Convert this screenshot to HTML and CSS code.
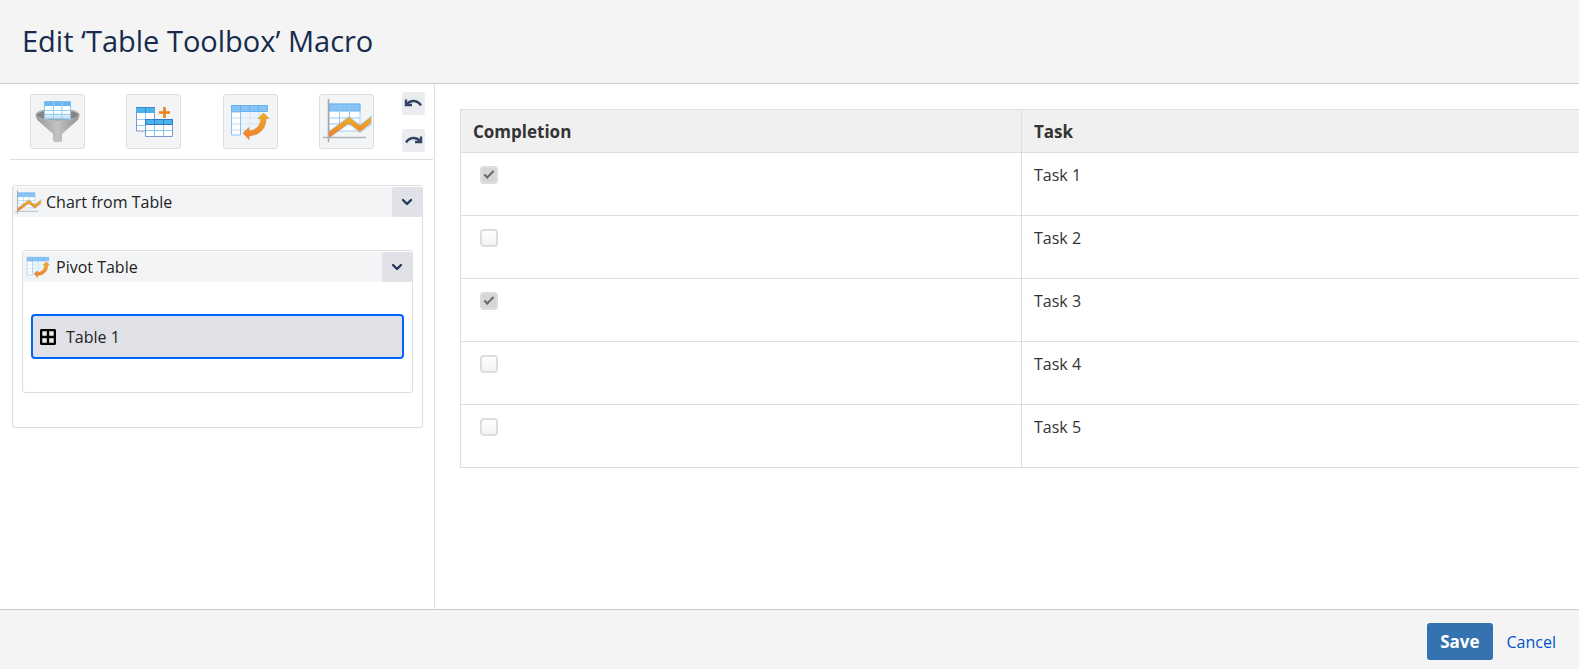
FILE: index.html
```
<!DOCTYPE html>
<html lang="en">
<head>
	<meta charset="UTF-8">
	<title>Table Toolbox</title>
	<link rel="stylesheet" href="styles.css">
</head>
<body>
	<!-- shared icons -->
	<svg class="defs" width="0" height="0" aria-hidden="true">
		<defs>
			<linearGradient id="grey" x1="0" y1="0" x2="1" y2="0">
				<stop offset="0" stop-color="#9a9a9a"/>
				<stop offset="0.5" stop-color="#c2c2c2"/>
				<stop offset="1" stop-color="#909090"/>
			</linearGradient>
			<linearGradient id="orange" x1="0" y1="0" x2="0" y2="1">
				<stop offset="0" stop-color="#ecb01e"/>
				<stop offset="1" stop-color="#f47a33"/>
			</linearGradient>
			<linearGradient id="sheet" x1="0" y1="0" x2="0" y2="1">
				<stop offset="0" stop-color="#fff"/>
				<stop offset="0.6" stop-color="#fff"/>
				<stop offset="1" stop-color="#b5daf3"/>
			</linearGradient>
		</defs>
		<symbol id="icon-pivot" viewBox="0 0 53 53">
			<path d="M17 17h27v6L31 39H17z" fill="#edf4fb"/>
			<path d="M17 23h25M17 29h20M17 35h10M26 17v20M35 17v12" stroke="#d3e6f7" fill="none"/>
			<path d="M7.500 10.500h36v6h-36z" fill="#86c4f7" stroke="#69b0ee"/>
			<path d="M7.500 17h9v23h-9z" fill="#fff" stroke="#8cc0ef"/>
			<path d="M8 23h8M8 29h8M8 35h8" stroke="#c0dcf5"/>
			<path d="M16.500 10v7M25.500 10v7M34.500 10v7" stroke="#69b0ee"/>
			<path d="M39.500 18l5.500 5.500h-3c0 10-6 16.500-17 17.500v3.500l-6-6.500 6-5.500v3.500c7-1 11.500-5 12-12.500h-3z" fill="url(#orange)" stroke="#d9842c" stroke-width=".6"/>
		</symbol>
		<symbol id="icon-chart" viewBox="0 0 53 53">
			<path d="M9 9h31v27H9z" fill="#fff" stroke="#a4cdf3"/>
			<path d="M9 9h31v7H9z" fill="#86c4f7" stroke="#69b0ee"/>
			<path d="M9 23h31M9 29h31M19.500 9v25M29.500 9v22" stroke="#93c9f2" fill="none"/>
			<path d="M8.500 4v43" stroke="#a2a6aa" stroke-width="1.500"/>
			<path d="M3 42.500h43" stroke="#b2b5b8" stroke-width="1.500"/>
			<path d="M9 37.500l20-15 11 9L50.500 23v6L40 36.500l-11-9-20 14z" fill="none" stroke="#9cc9f0" stroke-width="3" opacity=".5"/>
			<path d="M9 37L29 22.500l11 8.500L50.500 22.500v5.500L40 36.500l-11-8.500L9 42.500z" fill="url(#orange)" stroke="#d98d24" stroke-width=".6"/>
		</symbol>
		<symbol id="icon-chevron" viewBox="0 0 12 8">
			<path d="M2 2l4 4 4-4" fill="none" stroke="#253858" stroke-width="2.400" stroke-linecap="round" stroke-linejoin="round"/>
		</symbol>
	</svg>

	<header class="header">
		<h1>Edit ‘Table Toolbox’ Macro</h1>
	</header>

	<main class="main">
		<aside class="sidebar">
			<div class="toolbar">
				<div class="tools">
					<button type="button" class="tool" aria-label="Table Filter">
						<svg viewBox="0 0 53 53">
							<ellipse cx="26.500" cy="20" rx="21.500" ry="6" fill="#858585" stroke="#b5b5b5" stroke-width="1.500"/>
							<path d="M5 20.500c1 3 8 5.500 21.500 5.500S47 23.500 48 20.500c0 3-1 4-3 6L31 39v6c0 3-9 3-9 0v-6L8 26.500c-2-2-3-3-3-6z" fill="url(#grey)"/>
							<path d="M13.500 6.500h26v17.500h-26z" fill="url(#sheet)" stroke="#8fc7ef"/>
							<path d="M13.500 6.500h26v4.500h-26z" fill="#6bb6f1"/>
							<path d="M14 15.500h25M14 19.500h25M22.500 7v17M31 7v17" stroke="#93ccf2"/>
						</svg>
					</button>
					<button type="button" class="tool" aria-label="Table Joiner">
						<svg viewBox="0 0 53 53">
							<path d="M9.500 12.500h18v23.500h-18z" fill="#fff" stroke="#7f97cb"/>
							<path d="M9.500 12.500h18v5.500h-18z" fill="#4bb2ec"/>
							<path d="M10 24.500h17M10 30.500h17M18.500 18v18" stroke="#8bd0f4"/>
							<path d="M18.500 12v6M9 12.500h19" stroke="#3b88cf"/>
							<path d="M18.500 24.500h27v17h-27z" fill="#fff" stroke="#7f97cb"/>
							<path d="M18.500 24.500h27v5h-27z" fill="#4bb2ec" stroke="#3479c3"/>
							<path d="M19 35.500h26M27.500 30v11M36.500 30v11" stroke="#83c9f2"/>
							<path d="M27.500 24v6M36.500 24v6" stroke="#3479c3"/>
							<path d="M37.500 12v11M32 17.500h11" stroke="#ea8118" stroke-width="2.600"/>
						</svg>
					</button>
					<button type="button" class="tool" aria-label="Pivot Table">
						<svg><use href="#icon-pivot"/></svg>
					</button>
					<button type="button" class="tool" aria-label="Chart from Table">
						<svg><use href="#icon-chart"/></svg>
					</button>
				</div>
				<div class="history">
					<button type="button" aria-label="Undo">
						<svg viewBox="0 0 23 23">
							<path d="M5 12c4-4.500 10.500-4 14 1.500" fill="none" stroke="#344563" stroke-width="2.400"/>
							<path d="M4 7.500v5.500h6" fill="none" stroke="#344563" stroke-width="2.400"/>
						</svg>
					</button>
					<button type="button" aria-label="Redo">
						<svg viewBox="0 0 23 23">
							<path d="M18 12c-4-4.500-10.500-4-14 1.500" fill="none" stroke="#344563" stroke-width="2.400"/>
							<path d="M19 7.500v5.500h-6" fill="none" stroke="#344563" stroke-width="2.400"/>
						</svg>
					</button>
				</div>
			</div>

			<div class="tree">
				<section class="node">
					<div class="node-head">
						<svg class="node-icon" viewBox="4 2 49 49"><use href="#icon-chart" width="53" height="53"/></svg>
						<span>Chart from Table</span>
						<button type="button" class="node-menu" aria-label="Chart from Table menu">
							<svg><use href="#icon-chevron"/></svg>
						</button>
					</div>
					<div class="node-body">
						<section class="node">
							<div class="node-head">
								<svg class="node-icon" viewBox="4 5 45 45"><use href="#icon-pivot" width="53" height="53"/></svg>
								<span>Pivot Table</span>
								<button type="button" class="node-menu" aria-label="Pivot Table menu">
									<svg><use href="#icon-chevron"/></svg>
								</button>
							</div>
							<div class="node-body">
								<button type="button" class="leaf">
									<svg viewBox="0 0 16 16">
										<rect x="1" y="1" width="14" height="14" rx="1.500" fill="#eee" stroke="#000" stroke-width="2.600"/>
										<path d="M8 1v14M1 8h14" stroke="#000" stroke-width="2.400"/>
									</svg>
									<span>Table 1</span>
								</button>
							</div>
						</section>
					</div>
				</section>
			</div>
		</aside>

		<div class="preview">
			<table class="tasks">
				<thead>
					<tr><th>Completion</th><th>Task</th></tr>
				</thead>
				<tbody>
					<tr><td><input type="checkbox" id="task1" checked disabled></td><td><label for="task1">Task 1</label></td></tr>
					<tr><td><input type="checkbox" id="task2" disabled></td><td><label for="task2">Task 2</label></td></tr>
					<tr><td><input type="checkbox" id="task3" checked disabled></td><td><label for="task3">Task 3</label></td></tr>
					<tr><td><input type="checkbox" id="task4" disabled></td><td><label for="task4">Task 4</label></td></tr>
					<tr><td><input type="checkbox" id="task5" disabled></td><td><label for="task5">Task 5</label></td></tr>
				</tbody>
			</table>
		</div>
	</main>

	<footer class="footer">
		<button type="button" class="save">Save</button>
		<a href="#" class="cancel">Cancel</a>
	</footer>
</body>
</html>
```
FILE: styles.css
```
*{
	margin: 0;
	padding: 0;
	box-sizing: border-box;
}
body{
	display: flex;
	flex-direction: column;
	height: 100vh;
	overflow: hidden;
	background-color: #fff;
	color: #172b4d;
	font: 16px/24px "Segoe UI", "Open Sans", "Noto Sans", sans-serif;
}
button{
	border: 0;
	color: inherit;
	font: inherit;
	cursor: pointer;
}
svg{
	display: block;
}
.defs{
	position: absolute;
}

/* header */
.header{
	padding: 21px 22px 22px;
	background-color: #f4f4f4;
	border-bottom: 1px solid #ccc;
}
.header h1{
	font-size: 29px;
	font-weight: 500;
	line-height: 40px;
}

.main{
	display: flex;
	flex: 1;
	min-height: 0;
}

/* left column */
.sidebar{
	flex: none;
	width: 435px;
	border-right: 1px solid #dfe1e6;
	color: #222;
}
.toolbar{
	display: flex;
	justify-content: space-between;
	margin-left: 10px;
	margin-right: 1px;
	padding: 8px 8px 7px 20px;
	border-bottom: 1px solid #ddd;
}
.tools{
	display: flex;
	justify-content: space-between;
	width: 344px;
	padding: 2px 0 3px;
}
.tool{
	width: 55px;
	height: 55px;
	border: 1px solid #ddd;
	border-radius: 3px;
	background-color: #f3f4f6;
}
.tool svg{
	width: 53px;
	height: 53px;
}
.history{
	display: flex;
	flex-direction: column;
	justify-content: space-between;
}
.history button{
	width: 23px;
	height: 23px;
	border-radius: 3px;
	background-color: #ebecf0;
}
.history svg{
	width: 23px;
	height: 23px;
}

/* macro tree */
.tree{
	padding: 25px 11px 0 12px;
}
.node{
	border: 1px solid #ddd;
	border-radius: 3px;
	padding-top: 1px;
}
.node-head{
	display: flex;
	align-items: center;
	gap: 4px;
	height: 30px;
	padding-left: 2px;
	background-color: #f3f4f6;
}
.node-icon{
	width: 27px;
	height: 27px;
}
.node-menu{
	display: flex;
	align-items: center;
	justify-content: center;
	width: 30px;
	height: 30px;
	margin-left: auto;
	border-radius: 3px;
	background-color: #e1e2e8;
}
.node-menu svg{
	width: 12px;
	height: 8px;
}
.node-body{
	padding: 33px 9px 34px;
}
.node .node .node-body{
	padding: 32px 8px 33px;
}
.leaf{
	display: flex;
	align-items: center;
	gap: 10px;
	width: 100%;
	height: 45px;
	padding-left: 7px;
	border: 2px solid #0065ff;
	border-radius: 4px;
	background-color: #dfe1e6;
}
.leaf svg{
	width: 16px;
	height: 16px;
}

/* preview table */
.preview{
	flex: 1;
	min-width: 0;
	overflow: hidden;
	padding: 25px 0 0 25px;
	color: #333;
}
.tasks{
	width: calc(100% + 4px);
	table-layout: fixed;
	border-collapse: collapse;
}
.tasks th,
.tasks td{
	border: 1px solid #ddd;
	padding: 10px 12px 8px;
	text-align: left;
	vertical-align: top;
}
.tasks th{
	height: 43px;
	background-color: #f0f0f0;
	font-size: 17px;
	font-weight: 700;
}
.tasks td{
	height: 63px;
}
.tasks input{
	display: block;
	appearance: none;
	width: 18px;
	height: 18px;
	margin: 3px 7px;
	border: 2px solid #ddd;
	border-radius: 4px;
	background: linear-gradient(#fff, #f3f3f3);
}
.tasks input:checked{
	background: #d6d6d6;
}
.tasks input:checked::before{
	content: "";
	display: block;
	width: 8px;
	height: 3px;
	margin: 3px 2px;
	border: solid #666;
	border-width: 0 0 2px 2px;
	transform: rotate(-45deg);
}

/* footer */
.footer{
	display: flex;
	align-items: center;
	justify-content: flex-end;
	gap: 14px;
	height: 60px;
	padding: 4px 23px 0;
	border-top: 1px solid #ccc;
	background-color: #f4f4f4;
}
.save{
	height: 37px;
	padding: 0 13px;
	border-radius: 3px;
	background-color: #3572b0;
	color: #fff;
	font-size: 17px;
	font-weight: 700;
}
.cancel{
	color: #0052cc;
	text-decoration: none;
}
```
